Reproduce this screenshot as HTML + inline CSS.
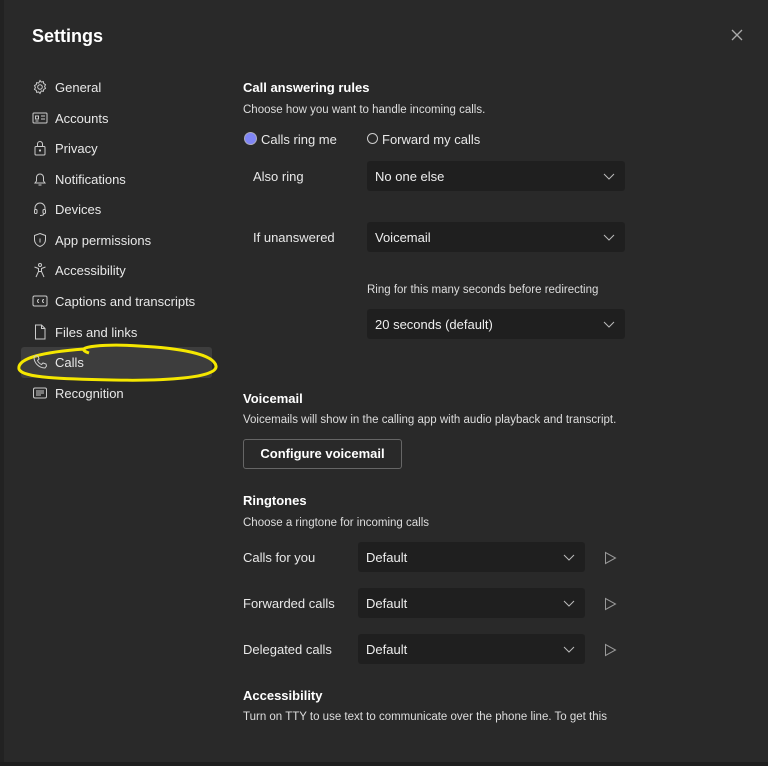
<!DOCTYPE html>
<html><head><style>
body{margin:0;width:768px;height:766px;background:#292929;font-family:"Liberation Sans",sans-serif;color:#fff;position:relative;overflow:hidden}
.a{position:absolute;white-space:nowrap}
.nav{font-size:13px;color:#e8e8e8}
.ic{position:absolute;left:32px;width:16px;height:16px}
h{position:absolute;font-weight:bold;font-size:13px;left:243px}
.s{position:absolute;font-size:11.5px;color:#ddd;left:243px}
.dd{position:absolute;background:#1f1f1f;border-radius:3px;font-size:13px;color:#eee}
.dd span{position:absolute;left:8px;top:8px}
.dd svg{position:absolute;right:10px;top:12px}
.lbl{position:absolute;font-size:13px;color:#e8e8e8}
</style></head><body>
<div style="position:absolute;left:0;top:0;width:4px;height:766px;background:#222"></div>
<div style="position:absolute;left:0;top:762px;width:768px;height:4px;background:#1e1e1e"></div>
<div class="a" style="left:32px;top:26px;font-size:18px;font-weight:bold">Settings</div>
<svg class="a" style="left:731px;top:29px" width="12" height="12"><path d="M1 1L11 11M11 1L1 11" stroke="#aaa" stroke-width="1.3"/></svg>

<div style="position:absolute;left:21px;top:347px;width:191px;height:31px;background:#3d3d3d;border-radius:3px"></div>
<svg class="a" style="left:14px;top:340px" width="208" height="45"><path d="M75 13C55 6 95 4 125 6 165 8 200 14 202 26 204 38 150 41 100 40 50 39 8 38 5 29 3 18 30 12 70 9" fill="none" stroke="#f5e700" stroke-width="3"/></svg>

<svg class="ic" style="top:79px" viewBox="0 0 16 16" fill="none" stroke="#ccc"><circle cx="8" cy="8" r="2.3"/><path d="M8 1.5l1.3 1.6 2-.5.4 2 1.8 1-.9 1.9.9 1.9-1.8 1-.4 2-2-.5L8 14.5 6.7 12.9l-2 .5-.4-2-1.8-1 .9-1.9L2.5 6.6l1.8-1 .4-2 2 .5z"/></svg>
<svg class="ic" style="top:110px" viewBox="0 0 16 16" fill="none" stroke="#ccc"><rect x="1" y="3" width="14" height="10" rx="1"/><path d="M3.5 6h3v3h-3zM9 6h4M9 9h4M3.5 11h3"/></svg>
<svg class="ic" style="top:140px" viewBox="0 0 16 16" fill="none" stroke="#ccc"><rect x="3" y="6.5" width="10" height="8.5" rx="1"/><path d="M5.5 6.5V4a2.5 2.5 0 015 0v2.5"/><circle cx="8" cy="10.5" r=".6" fill="#ccc"/></svg>
<svg class="ic" style="top:171px" viewBox="0 0 16 16" fill="none" stroke="#ccc"><path d="M3 12h10l-1.5-2V6.5a3.5 3.5 0 00-7 0V10zM6.5 14h3"/></svg>
<svg class="ic" style="top:201px" viewBox="0 0 16 16" fill="none" stroke="#ccc"><path d="M3 9V7a5 5 0 0110 0v2"/><rect x="2.5" y="8.5" width="2.5" height="4" rx="1"/><rect x="11" y="8.5" width="2.5" height="4" rx="1"/><path d="M12 12.5c0 1.5-2 2-4 2"/></svg>
<svg class="ic" style="top:232px" viewBox="0 0 16 16" fill="none" stroke="#ccc"><path d="M8 1.5l5.5 2v4c0 3.5-2.5 6-5.5 7-3-1-5.5-3.5-5.5-7v-4z"/><path d="M8 6.5v4"/></svg>
<svg class="ic" style="top:262px" viewBox="0 0 16 16" fill="none" stroke="#ccc"><circle cx="8" cy="3" r="1.5"/><path d="M2.5 5l4 1.5v3L4 15M13.5 5l-4 1.5v3L12 15M6.5 9.5h3"/></svg>
<svg class="ic" style="top:293px" viewBox="0 0 16 16" fill="none" stroke="#ccc"><rect x="1" y="3" width="14" height="10" rx="1.5"/><path d="M7 6.5a1.5 1.5 0 100 3M12 6.5a1.5 1.5 0 100 3"/></svg>
<svg class="ic" style="top:324px" viewBox="0 0 16 16" fill="none" stroke="#ccc"><path d="M3.5 1h6l3.5 3.5V15h-9.5zM9.5 1v3.5H13"/></svg>
<svg class="ic" style="top:354px" viewBox="0 0 16 16" fill="none" stroke="#ccc"><path d="M4 1.5l2 .5 1 3-1.5 1.5c.7 1.8 2 3.2 4 4L11 9l3 1 .5 2-1.5 2c-6 0-11-5-11-11z"/></svg>
<svg class="ic" style="top:385px" viewBox="0 0 16 16" fill="none" stroke="#ccc"><rect x="1.5" y="3" width="13" height="10" rx="1.5"/><path d="M4 6h8M4 8h8M4 10h5"/></svg>

<div class="a nav" style="left:55px;top:80px">General</div>
<div class="a nav" style="left:55px;top:111px">Accounts</div>
<div class="a nav" style="left:55px;top:141px">Privacy</div>
<div class="a nav" style="left:55px;top:172px">Notifications</div>
<div class="a nav" style="left:55px;top:202px">Devices</div>
<div class="a nav" style="left:55px;top:233px">App permissions</div>
<div class="a nav" style="left:55px;top:263px">Accessibility</div>
<div class="a nav" style="left:55px;top:294px">Captions and transcripts</div>
<div class="a nav" style="left:55px;top:325px">Files and links</div>
<div class="a nav" style="left:55px;top:355px">Calls</div>
<div class="a nav" style="left:55px;top:386px">Recognition</div>

<h style="top:80px">Call answering rules</h>
<div class="s a" style="top:104px">Choose how you want to handle incoming calls.</div>
<div style="position:absolute;left:245px;top:133px;width:11px;height:11px;border-radius:50%;background:#7f85f5;box-shadow:0 0 0 1px #aab"></div>
<div class="lbl a" style="left:261px;top:132px">Calls ring me</div>
<div style="position:absolute;left:367px;top:133px;width:9px;height:9px;border-radius:50%;border:1px solid #ccc"></div>
<div class="lbl a" style="left:382px;top:132px">Forward my calls</div>

<div class="lbl a" style="left:253px;top:169px">Also ring</div>
<div class="dd" style="left:367px;top:161px;width:258px;height:30px"><span>No one else</span><svg width="12" height="8"><path d="M1 1l5 5 5-5" fill="none" stroke="#bbb"/></svg></div>
<div class="lbl a" style="left:253px;top:230px">If unanswered</div>
<div class="dd" style="left:367px;top:222px;width:258px;height:30px"><span>Voicemail</span><svg width="12" height="8"><path d="M1 1l5 5 5-5" fill="none" stroke="#bbb"/></svg></div>
<div class="s a" style="left:367px;top:284px">Ring for this many seconds before redirecting</div>
<div class="dd" style="left:367px;top:309px;width:258px;height:30px"><span>20 seconds (default)</span><svg width="12" height="8"><path d="M1 1l5 5 5-5" fill="none" stroke="#bbb"/></svg></div>

<h style="top:391px">Voicemail</h>
<div class="s a" style="top:414px">Voicemails will show in the calling app with audio playback and transcript.</div>
<div style="position:absolute;left:243px;top:439px;width:157px;height:28px;border:1px solid #666;border-radius:3px;font-size:13px;font-weight:bold;text-align:center;line-height:28px">Configure voicemail</div>

<h style="top:493px">Ringtones</h>
<div class="s a" style="top:517px">Choose a ringtone for incoming calls</div>
<div class="lbl a" style="left:243px;top:550px">Calls for you</div>
<div class="dd" style="left:358px;top:542px;width:227px;height:30px"><span>Default</span><svg width="12" height="8"><path d="M1 1l5 5 5-5" fill="none" stroke="#bbb"/></svg></div>
<div class="lbl a" style="left:243px;top:596px">Forwarded calls</div>
<div class="dd" style="left:358px;top:588px;width:227px;height:30px"><span>Default</span><svg width="12" height="8"><path d="M1 1l5 5 5-5" fill="none" stroke="#bbb"/></svg></div>
<div class="lbl a" style="left:243px;top:642px">Delegated calls</div>
<div class="dd" style="left:358px;top:634px;width:227px;height:30px"><span>Default</span><svg width="12" height="8"><path d="M1 1l5 5 5-5" fill="none" stroke="#bbb"/></svg></div>
<svg class="a" style="left:604px;top:551px" width="14" height="14"><path d="M1.5 1.5v11l10-5.5z" fill="none" stroke="#999"/></svg>
<svg class="a" style="left:604px;top:597px" width="14" height="14"><path d="M1.5 1.5v11l10-5.5z" fill="none" stroke="#999"/></svg>
<svg class="a" style="left:604px;top:643px" width="14" height="14"><path d="M1.5 1.5v11l10-5.5z" fill="none" stroke="#999"/></svg>

<h style="top:688px">Accessibility</h>
<div class="s a" style="top:711px">Turn on TTY to use text to communicate over the phone line. To get this</div>
</body></html>
